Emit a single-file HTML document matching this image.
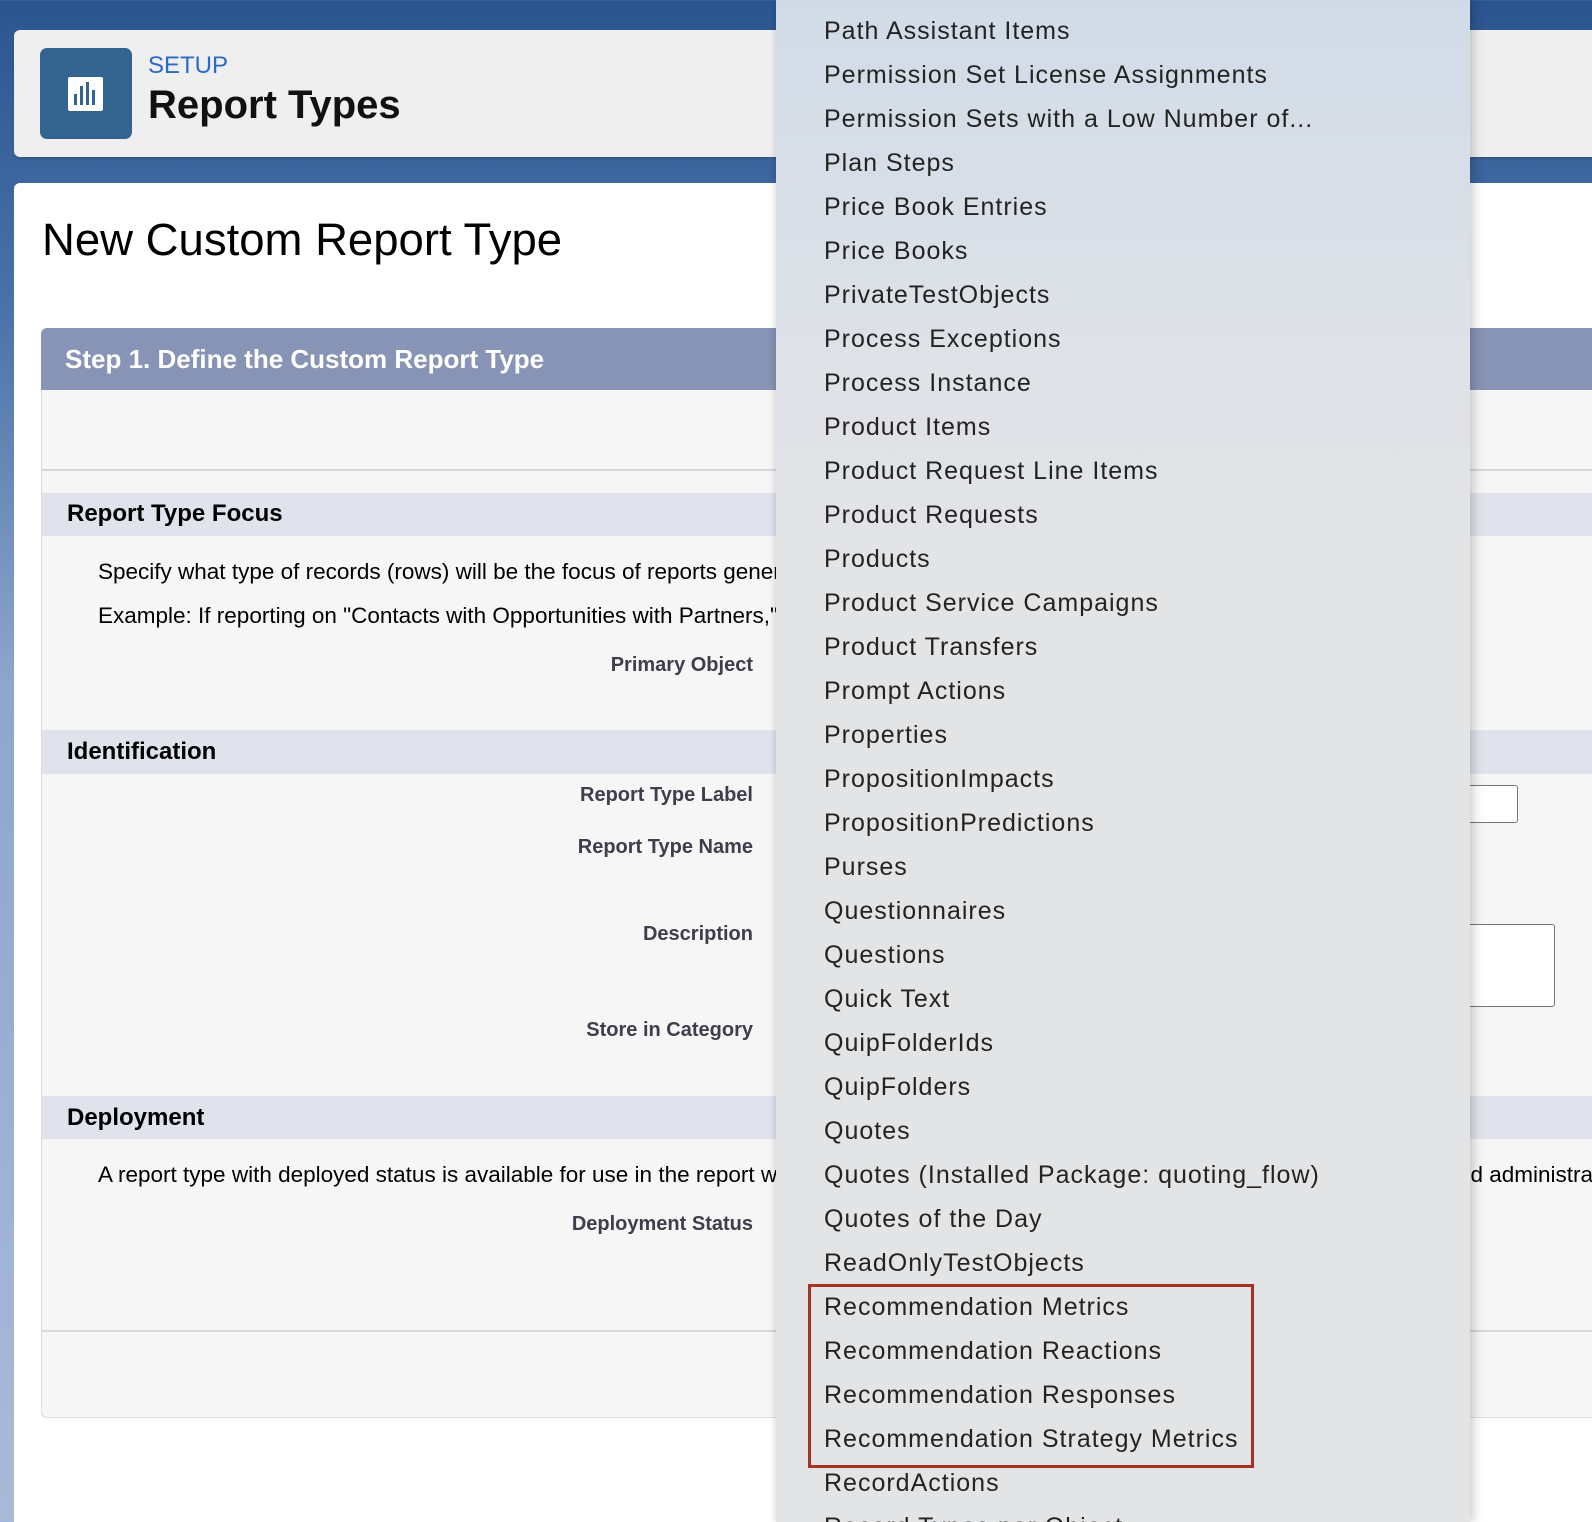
<!DOCTYPE html>
<html><head><meta charset="utf-8"><style>
*{margin:0;padding:0;box-sizing:border-box}
html{width:1592px;height:1522px;overflow:hidden}
body{width:1592px;height:1522px;overflow:hidden;position:relative;font-family:"Liberation Sans",Arial,sans-serif;background:linear-gradient(180deg,#2b5590 0%,#4a72a8 20%,#8da6cc 45%,#a9bad9 100%)}
.a{position:absolute;white-space:nowrap}
.hdr{left:14px;top:30px;width:1578px;height:127px;background:#efefef;border-radius:6px 0 0 6px;box-shadow:0 2px 2px rgba(0,0,0,.15)}
.card{left:14px;top:183px;width:1578px;height:1339px;background:#fff;border-radius:6px 0 0 0}
.panel{left:41px;top:328px;width:1551px;height:1090px;background:#f6f6f6;border:1px solid #dcdcdc;border-right:none;border-radius:6px 0 0 6px;overflow:hidden}
.sec{left:42px;width:1550px;background:#e0e3ec}
.sh{font-weight:bold;font-size:24px;color:#000;left:67px}
.lbl{font-weight:bold;font-size:20px;color:#3e3e4c;right:839px;text-align:right}
.txt{font-size:22.5px;color:#000;left:98px}
.dd{left:776px;top:0;width:694px;height:1522px;background:linear-gradient(180deg,#d1dbe7 0%,#dfe2e7 25%,#e3e4e6 40%,#e3e4e6 100%);box-shadow:4px 0 10px rgba(0,0,0,.18),-2px 0 6px rgba(0,0,0,.08);overflow:hidden}
.it{position:absolute;left:48px;font-size:25px;letter-spacing:1px;color:#232323;line-height:30px;white-space:nowrap}
</style></head><body>
<div class="a hdr"></div>
<div class="a" style="left:40px;top:48px;width:92px;height:91px;background:#33648f;border-radius:7px"></div>
<div class="a" style="left:68px;top:77px;width:35px;height:34px;background:#fff;border-radius:2px"></div>
<div class="a" style="left:74px;top:94px;width:3px;height:11px;background:#33648f"></div>
<div class="a" style="left:80px;top:86px;width:3px;height:19px;background:#33648f"></div>
<div class="a" style="left:86px;top:82px;width:3px;height:23px;background:#33648f"></div>
<div class="a" style="left:92px;top:90px;width:3px;height:15px;background:#33648f"></div>
<div class="a" style="left:148px;top:52px;font-size:24px;color:#2b6ac9">SETUP</div>
<div class="a" style="left:148px;top:83px;font-size:40px;font-weight:bold;color:#111">Report Types</div>
<div class="a card"></div>
<div class="a" style="left:42px;top:214px;font-size:45.5px;color:#000">New Custom Report Type</div>
<div class="a panel"></div>
<div class="a" style="left:41px;top:328px;width:1551px;height:62px;background:#8794b5;border-radius:6px 0 0 0"></div>
<div class="a" style="left:65px;top:344px;font-size:26px;font-weight:bold;color:#fff">Step 1. Define the Custom Report Type</div>
<div class="a" style="left:42px;top:469px;width:1550px;height:2px;background:#d8d8d8"></div>
<div class="a sec" style="top:493px;height:43px"></div>
<div class="a sh" style="top:500px">Report Type Focus</div>
<div class="a txt" style="top:559px">Specify what type of records (rows) will be the focus of reports generated</div>
<div class="a txt" style="top:603px">Example: If reporting on "Contacts with Opportunities with Partners," select</div>
<div class="a lbl" style="top:654px">Primary Object</div>
<div class="a sec" style="top:730px;height:44px"></div>
<div class="a sh" style="top:738px">Identification</div>
<div class="a lbl" style="top:784px">Report Type Label</div>
<div class="a lbl" style="top:836px">Report Type Name</div>
<div class="a lbl" style="top:923px">Description</div>
<div class="a lbl" style="top:1019px">Store in Category</div>
<div class="a" style="left:1400px;top:785px;width:118px;height:38px;background:#fff;border:1px solid #777;border-radius:3px"></div>
<div class="a" style="left:1400px;top:924px;width:155px;height:83px;background:#fff;border:1px solid #777;border-radius:3px"></div>
<div class="a sec" style="top:1096px;height:43px"></div>
<div class="a sh" style="top:1104px">Deployment</div>
<div class="a txt" style="top:1162px">A report type with deployed status is available for use in the report wizard</div>
<div class="a txt" style="left:1458px;top:1162px">ed administrators</div>
<div class="a lbl" style="top:1213px">Deployment Status</div>
<div class="a" style="left:42px;top:1330px;width:1550px;height:2px;background:#d8d8d8"></div>
<div class="a dd">
<div class="it" style="top:16px">Path Assistant Items</div>
<div class="it" style="top:60px">Permission Set License Assignments</div>
<div class="it" style="top:104px">Permission Sets with a Low Number of...</div>
<div class="it" style="top:148px">Plan Steps</div>
<div class="it" style="top:192px">Price Book Entries</div>
<div class="it" style="top:236px">Price Books</div>
<div class="it" style="top:280px">PrivateTestObjects</div>
<div class="it" style="top:324px">Process Exceptions</div>
<div class="it" style="top:368px">Process Instance</div>
<div class="it" style="top:412px">Product Items</div>
<div class="it" style="top:456px">Product Request Line Items</div>
<div class="it" style="top:500px">Product Requests</div>
<div class="it" style="top:544px">Products</div>
<div class="it" style="top:588px">Product Service Campaigns</div>
<div class="it" style="top:632px">Product Transfers</div>
<div class="it" style="top:676px">Prompt Actions</div>
<div class="it" style="top:720px">Properties</div>
<div class="it" style="top:764px">PropositionImpacts</div>
<div class="it" style="top:808px">PropositionPredictions</div>
<div class="it" style="top:852px">Purses</div>
<div class="it" style="top:896px">Questionnaires</div>
<div class="it" style="top:940px">Questions</div>
<div class="it" style="top:984px">Quick Text</div>
<div class="it" style="top:1028px">QuipFolderIds</div>
<div class="it" style="top:1072px">QuipFolders</div>
<div class="it" style="top:1116px">Quotes</div>
<div class="it" style="top:1160px">Quotes (Installed Package: quoting_flow)</div>
<div class="it" style="top:1204px">Quotes of the Day</div>
<div class="it" style="top:1248px">ReadOnlyTestObjects</div>
<div class="it" style="top:1292px">Recommendation Metrics</div>
<div class="it" style="top:1336px">Recommendation Reactions</div>
<div class="it" style="top:1380px">Recommendation Responses</div>
<div class="it" style="top:1424px">Recommendation Strategy Metrics</div>
<div class="it" style="top:1468px">RecordActions</div>
<div class="it" style="top:1512px">Record Types per Object</div>
<div style="position:absolute;left:32px;top:1284px;width:446px;height:184px;border:3px solid #a83222"></div>
</div>
</body></html>
